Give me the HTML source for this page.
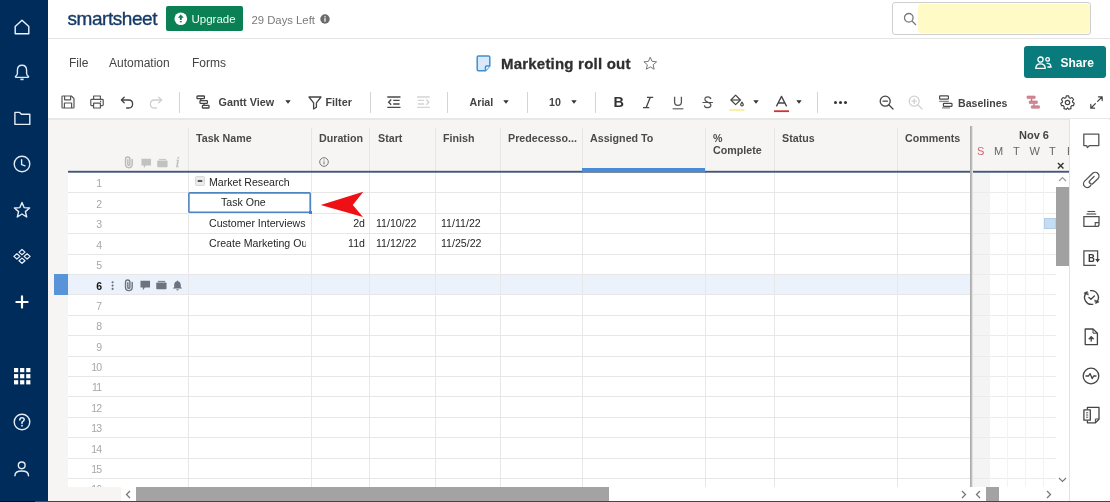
<!DOCTYPE html>
<html>
<head>
<meta charset="utf-8">
<title>Marketing roll out</title>
<style>
*{box-sizing:border-box;margin:0;padding:0}
html,body{width:1110px;height:502px;overflow:hidden;background:#fff;font-family:"Liberation Sans",sans-serif;}
#root{will-change:transform;position:relative;width:1110px;height:502px;overflow:hidden;background:#fff}
.abs{position:absolute}
.t{position:absolute;white-space:nowrap;line-height:1}
svg{position:absolute;overflow:visible}
/* sidebar */
#side{left:0;top:0;width:48px;height:502px;background:#002c5c}
/* top bar */
#topline{left:48px;top:38px;width:1062px;height:1px;background:#e4e4e4}
#upg{left:166px;top:6px;width:77px;height:25px;background:#0b8054;border-radius:2px}
#search{left:892px;top:2px;width:199px;height:33px;border:1px solid #cfcfcf;border-radius:3px;background:#fff}
#searchy{left:918px;top:4px;width:171.5px;height:29px;background:#fffac6;border-radius:3px}
#share{left:1024px;top:46px;width:82px;height:32px;background:#0a7b7d;border-radius:3px}
/* toolbar */
.sep{position:absolute;top:92px;width:1px;height:21px;background:#d4d4d4}
#tbline{left:48px;top:118px;width:1062px;height:2px;background:#e7e7e7}
/* grid */
#hdr{left:48px;top:120px;width:1022px;height:52px;background:#f6f5f3}
#leftstrip{left:48px;top:171px;width:20px;height:331px;background:#f6f5f3}
#hdrline{left:68px;top:171px;width:1002px;height:1px;background:#42567b;box-shadow:0 1px 0 rgba(66,86,123,0.7),0 -1px 0 rgba(66,86,123,0.18)}
.hl{position:absolute;left:68px;width:903px;height:1px;background:#e7e7e8}
.gl{position:absolute;left:972px;width:84px;height:1px;background:#ebebeb}
.vl{position:absolute;top:172px;width:1px;height:315px;background:#e8e8e9}
.hvl{position:absolute;top:128px;width:1px;height:43px;background:#e6e6e6}
.ch{position:absolute;top:132px;font-size:10.7px;font-weight:bold;color:#4a4a4a;line-height:12px;white-space:nowrap}
.rn{position:absolute;left:68px;width:34px;text-align:right;font-size:10.5px;color:#a7a7a7;line-height:1;white-space:nowrap}
.ct{position:absolute;font-size:10.6px;color:#262626;line-height:1;white-space:nowrap}
/* right panel */
#rp{left:1069px;top:119px;width:40px;height:383px;background:#fff;border-left:1px solid #e2e2e2}
</style>
</head>
<body>
<div id="root">

<!-- ============ TOP BAR ============ -->
<div class="t" id="logo" style="left:67.5px;top:8.5px;font-size:19px;color:#163a66;letter-spacing:-0.45px;font-weight:normal;-webkit-text-stroke:0.35px #163a66">smartsheet</div>
<div id="upg" class="abs"></div>
<svg style="left:173.5px;top:11.6px" width="13.6" height="13.6" viewBox="0 0 14 14"><circle cx="7" cy="7" r="6.5" fill="#fff"/><path d="M7 2.6 L10 6 H8 V8.2 H6 V6 H4 Z M6 9.2 H8 V10.6 H6 Z" fill="#0b8054"/></svg>
<div class="t" style="left:191.5px;top:14.2px;font-size:11.5px;color:#eafff4">Upgrade</div>
<div class="t" style="left:251.5px;top:15px;font-size:11.3px;color:#7a7a7a">29 Days Left</div>
<svg style="left:319.5px;top:14px" width="10" height="10" viewBox="0 0 11 11"><circle cx="5.5" cy="5.5" r="5.2" fill="#6b6b6b"/><rect x="4.8" y="4.6" width="1.4" height="3.8" fill="#fff"/><rect x="4.8" y="2.4" width="1.4" height="1.4" fill="#fff"/></svg>
<div id="search" class="abs"></div>
<div id="searchy" class="abs"></div>
<svg style="left:902.7px;top:12px" width="14" height="14" viewBox="0 0 14 14" fill="none" stroke="#7a7a7a" stroke-width="1.3"><circle cx="5.8" cy="5.8" r="4.3"/><path d="M9 9 L13 13"/></svg>
<div id="topline" class="abs"></div>

<!-- ============ MENU ROW ============ -->
<div class="t" style="left:69px;top:57px;font-size:12px;color:#444">File</div>
<div class="t" style="left:109px;top:57px;font-size:12px;color:#444">Automation</div>
<div class="t" style="left:192px;top:57px;font-size:12px;color:#444">Forms</div>
<svg style="left:476px;top:55px" width="15" height="17" viewBox="0 0 15 17" fill="#d9e8fa" stroke="#3f8fcf" stroke-width="1.5" stroke-linejoin="round"><path d="M2.5 1 H12.5 Q13.8 1 13.8 2.3 V11 L9.5 15.8 H2.5 Q1.2 15.8 1.2 14.5 V2.3 Q1.2 1 2.5 1 Z"/><path d="M13.8 11 H10.5 Q9.5 11 9.5 12 V15.8" fill="#fff"/></svg>
<div class="t" style="left:501px;top:56px;font-size:15px;font-weight:bold;color:#2f2f2f;letter-spacing:0.21px;-webkit-text-stroke:0.3px #2f2f2f">Marketing roll out</div>
<svg style="left:643px;top:56px" width="14.5" height="14.5" viewBox="0 0 16 16" fill="none" stroke="#777" stroke-width="1.1" stroke-linejoin="round"><path d="M8 1.3 L10 5.9 L15 6.4 L11.2 9.7 L12.3 14.6 L8 12 L3.7 14.6 L4.8 9.7 L1 6.4 L6 5.9 Z"/></svg>
<div id="share" class="abs"></div>
<svg style="left:1035px;top:56px" width="17" height="13" viewBox="0 0 17 13" fill="none" stroke="#fff" stroke-width="1.3"><circle cx="5.5" cy="3.6" r="2.6"/><path d="M0.8 12.3 Q0.8 7.8 5.5 7.8 Q10.2 7.8 10.2 12.3 Z"/><circle cx="12.6" cy="3.4" r="1.8"/><path d="M11.6 7.4 Q15.8 6.6 16 11 H12.4"/></svg>
<div class="t" style="left:1060.5px;top:57px;font-size:12px;font-weight:bold;color:#fff">Share</div>

<!-- ============ TOOLBAR ============ -->
<div id="toolbar">
<!-- save -->
<svg style="left:61px;top:95px" width="14" height="14" viewBox="0 0 14 14" fill="none" stroke="#555" stroke-width="1.2" stroke-linejoin="round"><path d="M1 1.8 Q1 1 1.8 1 H10.4 L13 3.6 V12.2 Q13 13 12.2 13 H1.8 Q1 13 1 12.2 Z"/><path d="M3.6 1 V4.8 H9.6 V1"/><path d="M3.4 13 V8 H10.6 V13"/></svg>
<!-- print -->
<svg style="left:90px;top:95px" width="14" height="14" viewBox="0 0 14 14" fill="none" stroke="#555" stroke-width="1.2" stroke-linejoin="round"><path d="M3.6 4.4 V1 H10.4 V4.4"/><path d="M3.6 10.6 H1.6 Q0.8 10.6 0.8 9.8 V5.2 Q0.8 4.4 1.6 4.4 H12.4 Q13.2 4.4 13.2 5.2 V9.8 Q13.2 10.6 12.4 10.6 H10.4"/><rect x="3.6" y="8.2" width="6.8" height="4.8"/><path d="M10 6.4 H11.2"/></svg>
<!-- undo -->
<svg style="left:120px;top:95.5px" width="14" height="14" viewBox="0 0 14 14" fill="none" stroke="#444" stroke-width="1.3" stroke-linecap="round" stroke-linejoin="round"><path d="M4.2 1.2 L1.4 4 L4.2 6.8"/><path d="M1.6 4 H8.6 Q12.6 4 12.6 8 Q12.6 12 8.6 12 H6.6"/></svg>
<!-- redo -->
<svg style="left:149px;top:95.5px" width="14" height="14" viewBox="0 0 14 14" fill="none" stroke="#cfcfcf" stroke-width="1.3" stroke-linecap="round" stroke-linejoin="round"><path d="M9.8 1.2 L12.6 4 L9.8 6.8"/><path d="M12.4 4 H5.4 Q1.4 4 1.4 8 Q1.4 12 5.4 12 H7.4"/></svg>
<div class="sep" style="left:179px"></div>
<!-- gantt -->
<svg style="left:196px;top:95px" width="14" height="14" viewBox="0 0 14 14" fill="none" stroke="#444" stroke-width="1.3" stroke-linejoin="round"><rect x="1" y="1" width="7.4" height="2.6" rx="0.6"/><rect x="4" y="5.7" width="7.4" height="2.6" rx="0.6"/><rect x="6.4" y="10.4" width="6.6" height="2.6" rx="0.6"/><path d="M4.8 3.8 V5.6 M8 8.4 V10.2"/></svg>
<div class="t" style="left:218.5px;top:96.8px;font-size:10.8px;font-weight:bold;color:#444">Gantt View</div>
<svg style="left:285px;top:100px" width="6" height="4" viewBox="0 0 6 4"><path d="M0.3 0.3 H5.7 L3 3.8 Z" fill="#333"/></svg>
<!-- filter -->
<svg style="left:308px;top:96px" width="14" height="14" viewBox="0 0 14 14" fill="none" stroke="#444" stroke-width="1.3" stroke-linejoin="round"><path d="M1 1 H13 L8.4 6.8 V11.2 L5.6 13 V6.8 Z"/></svg>
<div class="t" style="left:325.5px;top:96.8px;font-size:10.8px;font-weight:bold;color:#444">Filter</div>
<div class="sep" style="left:370px"></div>
<!-- outdent -->
<svg style="left:386px;top:94px" width="16" height="16" viewBox="386 94 16 16" fill="none" stroke="#4a4a4a" stroke-width="1.3"><path d="M387.3 97 H400.5 M387.3 107.3 H400.5 M393.2 100.4 H399.6 M393.2 104 H399.6"/><path d="M391.2 99.6 L388.7 102.2 L391.2 104.8" stroke-width="1.4"/></svg>
<!-- indent -->
<svg style="left:415px;top:94px" width="16" height="16" viewBox="415 94 16 16" fill="none" stroke="#d4d4d4" stroke-width="1.3"><path d="M417 97 H429.8 M417 107.3 H429.8 M417.8 100.4 H424.2 M417.8 104 H424.2"/><path d="M426.2 99.6 L428.8 102.2 L426.2 104.8" stroke-width="1.4"/></svg>
<div class="sep" style="left:447px"></div>
<div class="t" style="left:469.5px;top:96.5px;font-size:10.7px;font-weight:bold;color:#444">Arial</div>
<svg style="left:503px;top:100px" width="6" height="4" viewBox="0 0 6 4"><path d="M0.3 0.3 H5.7 L3 3.8 Z" fill="#333"/></svg>
<div class="sep" style="left:527px"></div>
<div class="t" style="left:549px;top:97px;font-size:10.7px;font-weight:bold;color:#444">10</div>
<svg style="left:571px;top:100px" width="6" height="4" viewBox="0 0 6 4"><path d="M0.3 0.3 H5.7 L3 3.8 Z" fill="#333"/></svg>
<div class="sep" style="left:595px"></div>
<!-- B I U S -->
<div class="t" style="left:613.5px;top:95px;font-size:14.5px;font-weight:bold;color:#333">B</div>
<svg style="left:642px;top:96px" width="12" height="13" viewBox="0 0 12 13" fill="none" stroke="#444" stroke-width="1.3"><path d="M5 1.4 H11.2 M1 11.6 H7.2 M8.2 1.4 L4.2 11.6"/></svg>
<svg style="left:671.7px;top:95.5px" width="12" height="14" viewBox="0 0 12 14" fill="none" stroke="#555" stroke-width="1.3"><path d="M2.6 0.8 V6 Q2.6 9.4 6 9.4 Q9.4 9.4 9.4 6 V0.8"/><path d="M0.6 12.8 H11.4" stroke-width="1.1"/></svg>
<svg style="left:701.5px;top:96px" width="11.4" height="13" viewBox="0 0 12 14" fill="none" stroke="#555" stroke-width="1.3"><path d="M9.4 3.4 Q9 1 6 1 Q3 1 3 3.6 Q3 5.6 6 6.6 Q9.4 7.6 9.4 10 Q9.4 12.6 6 12.6 Q2.8 12.6 2.4 10"/><path d="M0.4 7 H11.6" stroke-width="1.1"/></svg>
<!-- fill -->
<svg style="left:730px;top:94px" width="14" height="17" viewBox="0 0 14 17" fill="none" stroke="#444" stroke-width="1.2" stroke-linejoin="round"><path d="M5.6 1.2 L10.4 6 L5.6 10.6 L0.9 6 Z"/><path d="M1 6 H10.2"/><path d="M12 8.2 Q13.3 10 13.3 10.7 Q13.3 11.9 12 11.9 Q10.7 11.9 10.7 10.7 Q10.7 10 12 8.2 Z"/><path d="M-0.5 16 H14.5" stroke="#f5f0a0" stroke-width="1.8"/></svg>
<svg style="left:753px;top:100px" width="6" height="4" viewBox="0 0 6 4"><path d="M0.3 0.3 H5.7 L3 3.8 Z" fill="#333"/></svg>
<!-- A -->
<svg style="left:773.5px;top:94.5px" width="15" height="17" viewBox="0 0 15 17" fill="none" stroke="#444" stroke-width="1.3" stroke-linejoin="round"><path d="M2.4 11.4 L7.5 1.4 L12.6 11.4 M4.2 8 H10.8"/><path d="M0 16.2 H15" stroke="#cc3333" stroke-width="1.8"/></svg>
<svg style="left:796px;top:100px" width="6" height="4" viewBox="0 0 6 4"><path d="M0.3 0.3 H5.7 L3 3.8 Z" fill="#333"/></svg>
<div class="sep" style="left:817px"></div>
<!-- dots -->
<div class="abs" style="left:834px;top:101px;width:3px;height:3px;border-radius:2px;background:#333;box-shadow:5px 0 0 #333,10px 0 0 #333"></div>
<!-- zoom out -->
<svg style="left:879px;top:95px" width="15" height="15" viewBox="0 0 15 15" fill="none" stroke="#444" stroke-width="1.3" stroke-linecap="round"><circle cx="6.2" cy="6.2" r="5"/><path d="M10 10 L14 14 M4 6.2 H8.4"/></svg>
<!-- zoom in -->
<svg style="left:908px;top:95px" width="15" height="15" viewBox="0 0 15 15" fill="none" stroke="#d2d2d2" stroke-width="1.3" stroke-linecap="round"><circle cx="6.2" cy="6.2" r="5"/><path d="M10 10 L14 14 M4 6.2 H8.4 M6.2 4 V8.4"/></svg>
<!-- baselines -->
<svg style="left:938px;top:94px" width="16" height="16" viewBox="938 94 16 16" fill="none" stroke="#4a4a4a" stroke-width="1.2" stroke-linejoin="round"><rect x="939.6" y="95.9" width="8.8" height="3.2" rx="0.6"/><path d="M939.2 101.4 H948.8" stroke="#8a8a8a" stroke-width="1.3"/><rect x="943.4" y="103.3" width="8.6" height="3" rx="0.6"/><path d="M942 107.9 H950" stroke="#8a8a8a" stroke-width="1.3"/></svg>
<div class="t" style="left:958px;top:97.5px;font-size:10.6px;font-weight:bold;color:#444">Baselines</div>
<!-- red gantt -->
<svg style="left:1026px;top:94px" width="16" height="16" viewBox="1026 94 16 16" fill="#cf8893" stroke="#c47482" stroke-width="0.6" stroke-linejoin="round"><rect x="1027" y="96" width="8.2" height="2.6" rx="0.5"/><rect x="1029.2" y="100.9" width="8.2" height="2.6" rx="0.5"/><rect x="1031.3" y="105.7" width="8.2" height="2.6" rx="0.5"/><path d="M1031.6 98.6 V100.9 M1034 103.5 V105.7" fill="none" stroke-width="1.4"/></svg>
<!-- gear -->
<svg style="left:1060px;top:95px" width="15" height="15" viewBox="0 0 15 15" fill="none" stroke="#444" stroke-width="1.2" stroke-linejoin="round"><circle cx="7.5" cy="7.5" r="2.2"/><path d="M6.3 0.9 H8.7 L9.1 2.7 L10.3 3.3 L12 2.5 L13.6 4.5 L12.5 6 L12.7 7.3 L14.2 8.3 L13.5 10.7 L11.7 10.7 L10.8 11.8 L11 13.6 L8.7 14.3 L7.5 12.9 L6.3 14.3 L4 13.6 L4.2 11.8 L3.3 10.7 L1.5 10.7 L0.8 8.3 L2.3 7.3 L2.5 6 L1.4 4.5 L3 2.5 L4.7 3.3 L5.9 2.7 Z"/></svg>
<!-- expand -->
<svg style="left:1090px;top:96px" width="13" height="13" viewBox="0 0 13 13" fill="none" stroke="#444" stroke-width="1.2" stroke-linecap="round" stroke-linejoin="round"><path d="M7.6 5.4 L12 1 M8.4 0.8 H12.2 V4.6 M5.4 7.6 L1 12 M0.8 8.4 V12.2 H4.6"/></svg>
</div>
<div id="tbline" class="abs"></div>

<!-- ============ GRID ============ -->
<div id="hdr" class="abs"></div>
<div id="leftstrip" class="abs"></div>
<div id="grid">
<div class="abs" style="left:68px;top:274.0px;width:903px;height:20.4px;background:#ecf2fb"></div>
<div class="abs" style="left:54px;top:274.0px;width:14px;height:20.9px;background:#5a94d8"></div>
<div class="abs" style="left:972px;top:172px;width:17px;height:315px;background:#f4f4f4"></div>
<div class="hl" style="top:192.4px"></div>
<div class="gl" style="top:192.4px"></div>
<div class="hl" style="top:212.8px"></div>
<div class="gl" style="top:212.8px"></div>
<div class="hl" style="top:233.2px"></div>
<div class="gl" style="top:233.2px"></div>
<div class="hl" style="top:253.6px"></div>
<div class="gl" style="top:253.6px"></div>
<div class="hl" style="top:274.0px"></div>
<div class="gl" style="top:274.0px"></div>
<div class="hl" style="top:294.4px"></div>
<div class="gl" style="top:294.4px"></div>
<div class="hl" style="top:314.8px"></div>
<div class="gl" style="top:314.8px"></div>
<div class="hl" style="top:335.2px"></div>
<div class="gl" style="top:335.2px"></div>
<div class="hl" style="top:355.6px"></div>
<div class="gl" style="top:355.6px"></div>
<div class="hl" style="top:376.0px"></div>
<div class="gl" style="top:376.0px"></div>
<div class="hl" style="top:396.4px"></div>
<div class="gl" style="top:396.4px"></div>
<div class="hl" style="top:416.8px"></div>
<div class="gl" style="top:416.8px"></div>
<div class="hl" style="top:437.2px"></div>
<div class="gl" style="top:437.2px"></div>
<div class="hl" style="top:457.6px"></div>
<div class="gl" style="top:457.6px"></div>
<div class="hl" style="top:478.0px"></div>
<div class="gl" style="top:478.0px"></div>
<div class="vl" style="left:188px"></div>
<div class="hvl" style="left:188px"></div>
<div class="vl" style="left:311px"></div>
<div class="hvl" style="left:311px"></div>
<div class="vl" style="left:369px"></div>
<div class="hvl" style="left:369px"></div>
<div class="vl" style="left:435px"></div>
<div class="hvl" style="left:435px"></div>
<div class="vl" style="left:500px"></div>
<div class="hvl" style="left:500px"></div>
<div class="vl" style="left:582px"></div>
<div class="hvl" style="left:582px"></div>
<div class="vl" style="left:705px"></div>
<div class="hvl" style="left:705px"></div>
<div class="vl" style="left:774px"></div>
<div class="hvl" style="left:774px"></div>
<div class="vl" style="left:897px"></div>
<div class="hvl" style="left:897px"></div>
<div class="vl" style="left:989px;background:#f3f3f3"></div>
<div class="vl" style="left:1007px;background:#f3f3f3"></div>
<div class="vl" style="left:1025px;background:#f3f3f3"></div>
<div class="vl" style="left:1043px;background:#f3f3f3"></div>
<div class="rn" style="top:178.3px">1</div>
<div class="rn" style="top:198.7px">2</div>
<div class="rn" style="top:219.1px">3</div>
<div class="rn" style="top:239.5px">4</div>
<div class="rn" style="top:259.9px">5</div>
<div class="rn" style="top:280.8px;color:#161616;font-weight:bold">6</div>
<div class="rn" style="top:300.7px">7</div>
<div class="rn" style="top:321.1px">8</div>
<div class="rn" style="top:341.5px">9</div>
<div class="rn" style="top:361.9px;letter-spacing:-0.9px;padding-right:0.9px">10</div>
<div class="rn" style="top:382.3px;letter-spacing:-0.9px;padding-right:0.9px">11</div>
<div class="rn" style="top:402.7px;letter-spacing:-0.9px;padding-right:0.9px">12</div>
<div class="rn" style="top:423.1px;letter-spacing:-0.9px;padding-right:0.9px">13</div>
<div class="rn" style="top:443.5px;letter-spacing:-0.9px;padding-right:0.9px">14</div>
<div class="rn" style="top:463.9px;letter-spacing:-0.9px;padding-right:0.9px">15</div>
<div class="rn" style="top:484.3px;letter-spacing:-0.9px;padding-right:0.9px">16</div>
<!-- header line -->
<div id="hdrline" class="abs"></div>
<div class="abs" style="left:582px;top:168px;width:123px;height:4px;background:#4a8bd6"></div>
<!-- header labels -->
<div class="ch" style="left:196px">Task Name</div>
<div class="ch" style="left:319px">Duration</div>
<div class="ch" style="left:378px">Start</div>
<div class="ch" style="left:443px">Finish</div>
<div class="ch" style="left:508px">Predecesso...</div>
<div class="ch" style="left:590px">Assigned To</div>
<div class="ch" style="left:713px">%<br>Complete</div>
<div class="ch" style="left:782px">Status</div>
<div class="ch" style="left:905px">Comments</div>
<svg style="left:319px;top:157px" width="10" height="10" viewBox="0 0 10 10" fill="none" stroke="#777" stroke-width="1"><circle cx="5" cy="5" r="4.3"/><path d="M5 4.4 V7.3 M5 2.6 V3.5" stroke-width="1.1"/></svg>
<!-- header row icons -->
<svg style="left:123.3px;top:156.3px" width="11.5" height="12.5" viewBox="0 0 11 12" fill="none" stroke="#bbbbbb" stroke-width="1.4" stroke-linecap="round"><path d="M8.8 3.4 V8 Q8.8 11.2 5.6 11.2 Q2.4 11.2 2.4 8 V3.2 Q2.4 0.9 4.5 0.9 Q6.6 0.9 6.6 3.2 V7.8 Q6.6 8.9 5.6 8.9 Q4.6 8.9 4.6 7.8 V3.6"/></svg>
<svg style="left:140.5px;top:157.6px" width="10.5" height="11" viewBox="0 0 11 11"><path d="M0.5 0.5 H10.5 V7.5 H5.2 L3 10.4 V7.5 H0.5 Z" fill="#c2c2c2"/></svg>
<svg style="left:156.8px;top:157.5px" width="11" height="10" viewBox="0 0 12 10"><rect x="0.3" y="2.3" width="11.2" height="7.4" rx="0.9" fill="#c2c2c2"/><rect x="2" y="0.5" width="8" height="1.2" fill="#c8c8c8"/></svg>
<div class="t" style="left:175.5px;top:155px;font-family:'Liberation Serif',serif;font-style:italic;font-size:14.5px;color:#bfbfbf;-webkit-text-stroke:0.3px #bfbfbf">i</div>
<!-- cells -->
<svg style="left:195px;top:176px" width="10" height="10" viewBox="0 0 10 10"><rect x="0.5" y="0.5" width="9" height="9" rx="1" fill="#ececec" stroke="#cfcfcf" stroke-width="0.8"/><rect x="2.7" y="4.2" width="4.6" height="1.6" fill="#333"/></svg>
<div class="ct" style="left:209px;top:176.5px">Market Research</div>
<div class="ct" style="left:221px;top:197px">Task One</div>
<div class="ct" style="left:209px;top:217.5px">Customer Interviews</div>
<div class="ct" style="left:209px;top:238px;width:97px;overflow:hidden">Create Marketing Outline</div>
<div class="ct" style="left:311px;top:217.5px;width:54px;text-align:right">2d</div>
<div class="ct" style="left:311px;top:238px;width:54px;text-align:right">11d</div>
<div class="ct" style="left:376px;top:217.5px">11/10/22</div>
<div class="ct" style="left:376px;top:238px">11/12/22</div>
<div class="ct" style="left:441px;top:217.5px">11/11/22</div>
<div class="ct" style="left:441px;top:238px">11/25/22</div>
<!-- selected cell -->
<svg style="left:186px;top:190px" width="128" height="26" viewBox="186 190 128 26"><rect x="188.9" y="192.9" width="121.3" height="19.3" rx="0.8" fill="none" stroke="#4d84c4" stroke-width="1.6"/></svg>
<div class="abs" style="left:309px;top:210.5px;width:3px;height:3.5px;background:#4a7fc1"></div>
<!-- red arrow -->
<svg style="left:318px;top:188px" width="50" height="32" viewBox="318 188 50 32"><path d="M320.7 205 L363.3 191.7 L352.8 205 L363 217 Z" fill="#ee1014"/></svg>
<!-- row 6 icons -->
<svg style="left:110px;top:280px" width="5" height="11" viewBox="0 0 5 11" fill="#6a7078"><circle cx="2.6" cy="2.3" r="1.05"/><circle cx="2.6" cy="5.6" r="1.05"/><circle cx="2.6" cy="8.9" r="1.05"/></svg>
<svg style="left:123.3px;top:278.6px" width="11.5" height="12.5" viewBox="0 0 11 12" fill="none" stroke="#6c7480" stroke-width="1.35" stroke-linecap="round"><path d="M8.8 3.4 V8 Q8.8 11.2 5.6 11.2 Q2.4 11.2 2.4 8 V3.2 Q2.4 0.9 4.5 0.9 Q6.6 0.9 6.6 3.2 V7.8 Q6.6 8.9 5.6 8.9 Q4.6 8.9 4.6 7.8 V3.6"/></svg>
<svg style="left:139.8px;top:280.4px" width="10.5" height="11" viewBox="0 0 11 11"><path d="M0.5 0.5 H10.5 V7.5 H5.2 L3 10.4 V7.5 H0.5 Z" fill="#6c7480"/></svg>
<svg style="left:156.4px;top:280.2px" width="11" height="10" viewBox="0 0 12 10"><rect x="0.3" y="2.3" width="11.2" height="7.4" rx="0.9" fill="#6c7480"/><rect x="2" y="0.5" width="8" height="1.2" fill="#7c838d"/></svg>
<svg style="left:171.6px;top:279.6px" width="11" height="11" viewBox="0 0 11 11"><path d="M5.5 0.5 Q6.2 0.5 6.2 1.3 Q8.8 2 8.8 5 V7 L10.2 8.6 H0.8 L2.2 7 V5 Q2.2 2 4.8 1.3 Q4.8 0.5 5.5 0.5 Z M4.3 9.3 H6.7 Q6.5 10.6 5.5 10.6 Q4.5 10.6 4.3 9.3 Z" fill="#6c7480"/></svg>
<!-- gantt header -->
<div class="t" style="left:1019px;top:130px;font-size:11px;font-weight:bold;color:#444">Nov 6</div>
<div class="t" style="left:977px;top:146px;font-size:11px;color:#d0626c">S</div>
<div class="t" style="left:994px;top:146px;font-size:11px;color:#666">M</div>
<div class="t" style="left:1013px;top:146px;font-size:11px;color:#666">T</div>
<div class="t" style="left:1029.5px;top:146px;font-size:11px;color:#666">W</div>
<div class="t" style="left:1049px;top:146px;font-size:11px;color:#666">T</div>
<div class="t" style="left:1067px;top:146px;font-size:11px;color:#666;width:2.5px;overflow:hidden">F</div>
<svg style="left:1057px;top:161.6px" width="7.4" height="7.4" viewBox="0 0 8 8" stroke="#333" stroke-width="1.5"><path d="M1 1 L7 7 M7 1 L1 7"/></svg>
<!-- gantt bar -->
<div class="abs" style="left:1044px;top:218px;width:12px;height:11px;background:#c5ddf3;border:1px solid #b2cfe9"></div>
<!-- gantt divider -->
<div class="abs" style="left:970px;top:126px;width:3px;height:376px;background:linear-gradient(90deg,#adadad 0,#adadad 1px,#bcbcbc 1px,#bcbcbc 2px,#e2e2e2 2px)"></div>
<!-- v scrollbar -->
<div class="abs" style="left:1056px;top:173px;width:14px;height:315px;background:#fff"></div>
<div class="abs" style="left:1055.5px;top:186.5px;width:13.5px;height:79.5px;background:#a1a1a1"></div>
<svg style="left:1058px;top:176px" width="9" height="6" viewBox="0 0 9 6" fill="none" stroke="#999" stroke-width="1.2"><path d="M1 5 L4.5 1.5 L8 5"/></svg>
<svg style="left:1058px;top:477px" width="9" height="6" viewBox="0 0 9 6" fill="none" stroke="#777" stroke-width="1.2"><path d="M1 1 L4.5 4.5 L8 1"/></svg>
<!-- h scrollbar -->
<div class="abs" style="left:54px;top:487px;width:1016px;height:15px;background:#fff"></div>
<div class="abs" style="left:48px;top:487px;width:73px;height:15px;background:#f6f5f3"></div>
<div class="abs" style="left:136px;top:487px;width:473px;height:14px;background:#a3a3a3"></div>
<svg style="left:125px;top:490px" width="6" height="9" viewBox="0 0 6 9" fill="none" stroke="#777" stroke-width="1.3"><path d="M5 1 L1.5 4.5 L5 8"/></svg>
<svg style="left:961px;top:490px" width="6" height="9" viewBox="0 0 6 9" fill="none" stroke="#777" stroke-width="1.3"><path d="M1 1 L4.5 4.5 L1 8"/></svg>
<svg style="left:975px;top:490px" width="6" height="9" viewBox="0 0 6 9" fill="none" stroke="#777" stroke-width="1.3"><path d="M5 1 L1.5 4.5 L5 8"/></svg>
<svg style="left:1046px;top:490px" width="6" height="9" viewBox="0 0 6 9" fill="none" stroke="#777" stroke-width="1.3"><path d="M1 1 L4.5 4.5 L1 8"/></svg>
<div class="abs" style="left:986px;top:487px;width:13px;height:14px;background:#a3a3a3"></div>

</div>

<!-- ============ RIGHT PANEL ============ -->
<div id="rp" class="abs"></div>
<div id="rpicons">
<!-- comment -->
<svg style="left:1083px;top:133px" width="17" height="16" viewBox="0 0 17 16" fill="none" stroke="#555" stroke-width="1.3" stroke-linejoin="round"><path d="M0.8 1.2 H15.8 V12.6 H6.6 L4.4 14.6 L3.6 12.6 H0.8 Z"/></svg>
<!-- paperclip -->
<svg style="left:1081px;top:169px" width="21" height="21" viewBox="1081 169 21 21" fill="none" stroke="#555" stroke-width="1.35" stroke-linecap="round" stroke-linejoin="round"><path transform="translate(1091.25 179.9) rotate(-44)" d="M4.4 -0.5 L-1.2 -0.5 A2.1 2.1 0 0 0 -1.2 3.7 L5.6 3.7 A3.7 3.7 0 0 0 5.6 -3.7 L-5.6 -3.7 A3.7 3.7 0 0 0 -5.6 3.7 L-4.3 3.7"/></svg>
<!-- stack -->
<svg style="left:1083px;top:210px" width="17" height="18" viewBox="0 0 17 18" fill="none" stroke="#505050" stroke-width="1.3" stroke-linejoin="miter"><path d="M4.4 1.5 H12.2" stroke-width="1.1"/><path d="M3.4 4 H13.2" stroke="#8c8c8c" stroke-width="1.8"/><path d="M0.9 6.7 H16 V14.4 Q16 16.4 14 16.4 H0.9 Z"/><path d="M16 12.6 H12.2 V16.4" stroke-width="1.1"/></svg>
<!-- B down -->
<svg style="left:1083px;top:250px" width="17" height="17" viewBox="0 0 17 17" fill="none" stroke="#505050" stroke-width="1.3" stroke-linejoin="miter"><path d="M12.8 15.4 H0.9 V0.9 H14.6 V9.4"/><path d="M14.6 12.4 L12.3 9 H16.9 Z" fill="#3a3a3a" stroke="none"/></svg>
<div class="t" style="left:1087.6px;top:253px;font-size:11px;font-weight:bold;color:#383838;transform:scaleX(0.86);transform-origin:left">B</div>
<!-- sync check -->
<svg style="left:1082.5px;top:289.2px" width="17" height="17" viewBox="0 0 17 17" fill="none" stroke="#454545" stroke-width="1.35" stroke-linecap="round" stroke-linejoin="round"><path d="M7.54 1.67 A6.9 6.9 0 0 1 13.94 12.75"/><path d="M11.9 11.1 L16.1 12.9 L12.9 14.4 Z" fill="#454545" stroke-width="0.6"/><path d="M9.7 15.3 A6.9 6.9 0 0 1 3.06 4.25"/><path d="M5.1 5.9 L0.9 4.1 L4.1 2.6 Z" fill="#454545" stroke-width="0.6"/><path d="M5.9 8.5 L8 10.3 L11.4 7"/></svg>
<!-- doc up -->
<svg style="left:1084px;top:328px" width="15" height="18" viewBox="0 0 15 18" fill="none" stroke="#444" stroke-width="1.3" stroke-linejoin="round"><path d="M1.2 1 H9 L13.4 5.2 V16.6 H1.2 Z"/><path d="M9 1 V5.2 H13.4" stroke-width="1"/><path d="M7.2 13.6 V9.2 M4.8 11.2 L7.2 8.8 L9.6 11.2" stroke-width="1.4"/></svg>
<!-- activity -->
<svg style="left:1082px;top:367px" width="18" height="18" viewBox="0 0 18 18" fill="none" stroke="#444" stroke-width="1.3" stroke-linejoin="round" stroke-linecap="round"><circle cx="9" cy="9" r="7.8"/><path d="M4 9 H6.6 L8 6.6 L10.2 11.6 L11.6 9 H14"/></svg>
<!-- summary -->
<svg style="left:1083px;top:406px" width="17" height="18" viewBox="0 0 17 18" fill="none" stroke="#444" stroke-width="1.3" stroke-linejoin="round"><path d="M4.4 3.6 V1.4 H16 V13.2 L12.4 16.8 H4.4 V14.4"/><path d="M16 13 H12.4 V16.6" stroke-width="1"/><rect x="0.9" y="3.8" width="6.4" height="10.4"/><path d="M3 6.8 H5.2 M3 9 H5.2 M3 11.2 H5.2" stroke-width="0.9"/></svg>
</div>

<!-- ============ SIDEBAR ============ -->
<div id="side" class="abs"></div>
<div class="abs" style="left:0;top:500.6px;width:1110px;height:1.4px;background:linear-gradient(90deg,#0c0c0c 0,#0c0c0c 35px,#454545 35px)"></div>
<div id="sideicons">
<!-- home -->
<svg style="left:14px;top:19px" width="16" height="16" viewBox="0 0 16 16" fill="none" stroke="#eef3fa" stroke-width="1.4" stroke-linejoin="round"><path d="M1.2 7.6 L8 1.2 L14.8 7.6 V14.8 H1.2 Z"/></svg>
<!-- bell -->
<svg style="left:14px;top:64px" width="16" height="17" viewBox="0 0 16 17" fill="none" stroke="#dfe8f4" stroke-width="1.4" stroke-linejoin="round"><path d="M8 1.2 Q12.6 1.2 12.6 6.4 V9.6 Q12.6 11 14.6 12.6 Q14.6 13.4 13.8 13.4 H2.2 Q1.4 13.4 1.4 12.6 Q3.4 11 3.4 9.6 V6.4 Q3.4 1.2 8 1.2 Z"/><path d="M6.4 15.4 H9.6" stroke-width="1.6"/></svg>
<!-- folder -->
<svg style="left:14px;top:111px" width="17" height="15" viewBox="0 0 17 15" fill="none" stroke="#e4ecf6" stroke-width="1.4" stroke-linejoin="round"><path d="M0.9 1.4 H5.6 L7.4 3.2 H15.8 V13.4 H0.9 Z"/></svg>
<!-- clock -->
<svg style="left:13px;top:155px" width="18" height="18" viewBox="0 0 18 18" fill="none" stroke="#dfe8f4" stroke-width="1.4" stroke-linecap="round"><circle cx="9" cy="9" r="7.8"/><path d="M8.6 4.8 V9.6 L12 10.8"/></svg>
<!-- star -->
<svg style="left:13px;top:201px" width="18" height="18" viewBox="0 0 18 18" fill="none" stroke="#e4ecf6" stroke-width="1.4" stroke-linejoin="round"><path d="M9 1.4 L11.1 6.6 L16.6 7 L12.4 10.6 L13.7 16 L9 13 L4.3 16 L5.6 10.6 L1.4 7 L6.9 6.6 Z"/></svg>
<!-- diamonds -->
<svg style="left:12px;top:247px" width="20" height="19" viewBox="12 247 20 19" fill="none" stroke="#e8eef7" stroke-width="1.25" stroke-linejoin="round"><path d="M22 249.5 L25.0 252.1 L22 254.7 L19.0 252.1 Z"/><path d="M16.9 253.79999999999998 L19.9 256.4 L16.9 259.0 L13.899999999999999 256.4 Z"/><path d="M27.1 253.79999999999998 L30.1 256.4 L27.1 259.0 L24.1 256.4 Z"/><path d="M22 258.09999999999997 L25.0 260.7 L22 263.3 L19.0 260.7 Z"/></svg>
<!-- plus -->
<svg style="left:15px;top:295px" width="14" height="14" viewBox="0 0 14 14" fill="none" stroke="#fff" stroke-width="2.2" stroke-linecap="round"><path d="M7 1.4 V12.6 M1.4 7 H12.6"/></svg>
<!-- apps -->
<svg style="left:14px;top:368px" width="17" height="17" viewBox="0 0 17 17" fill="#fff"><rect x="0" y="0" width="4.2" height="4.2"/><rect x="6.1" y="0" width="4.2" height="4.2"/><rect x="12.2" y="0" width="4.2" height="4.2"/><rect x="0" y="6.1" width="4.2" height="4.2"/><rect x="6.1" y="6.1" width="4.2" height="4.2"/><rect x="12.2" y="6.1" width="4.2" height="4.2"/><rect x="0" y="12.2" width="4.2" height="4.2"/><rect x="6.1" y="12.2" width="4.2" height="4.2"/><rect x="12.2" y="12.2" width="4.2" height="4.2"/></svg>
<!-- help -->
<svg style="left:13px;top:413px" width="18" height="18" viewBox="0 0 18 18" fill="none" stroke="#e4ecf6" stroke-width="1.4" stroke-linecap="round"><circle cx="9" cy="9" r="7.8"/><path d="M6.8 7 Q6.8 4.8 9 4.8 Q11.2 4.8 11.2 6.8 Q11.2 8 9 9.2 V10.4" stroke-width="1.5"/><path d="M9 12.6 V12.8" stroke-width="1.7"/></svg>
<!-- user -->
<svg style="left:14.2px;top:460.6px" width="16" height="16" viewBox="0 0 17 17" fill="none" stroke="#e4ecf6" stroke-width="1.5" stroke-linecap="round"><circle cx="8.2" cy="4.6" r="3.6"/><path d="M1 15.6 Q1 10.6 8.2 10.6 Q15.4 10.6 15.4 15.6"/></svg>
</div>

</div>
</body>
</html>
